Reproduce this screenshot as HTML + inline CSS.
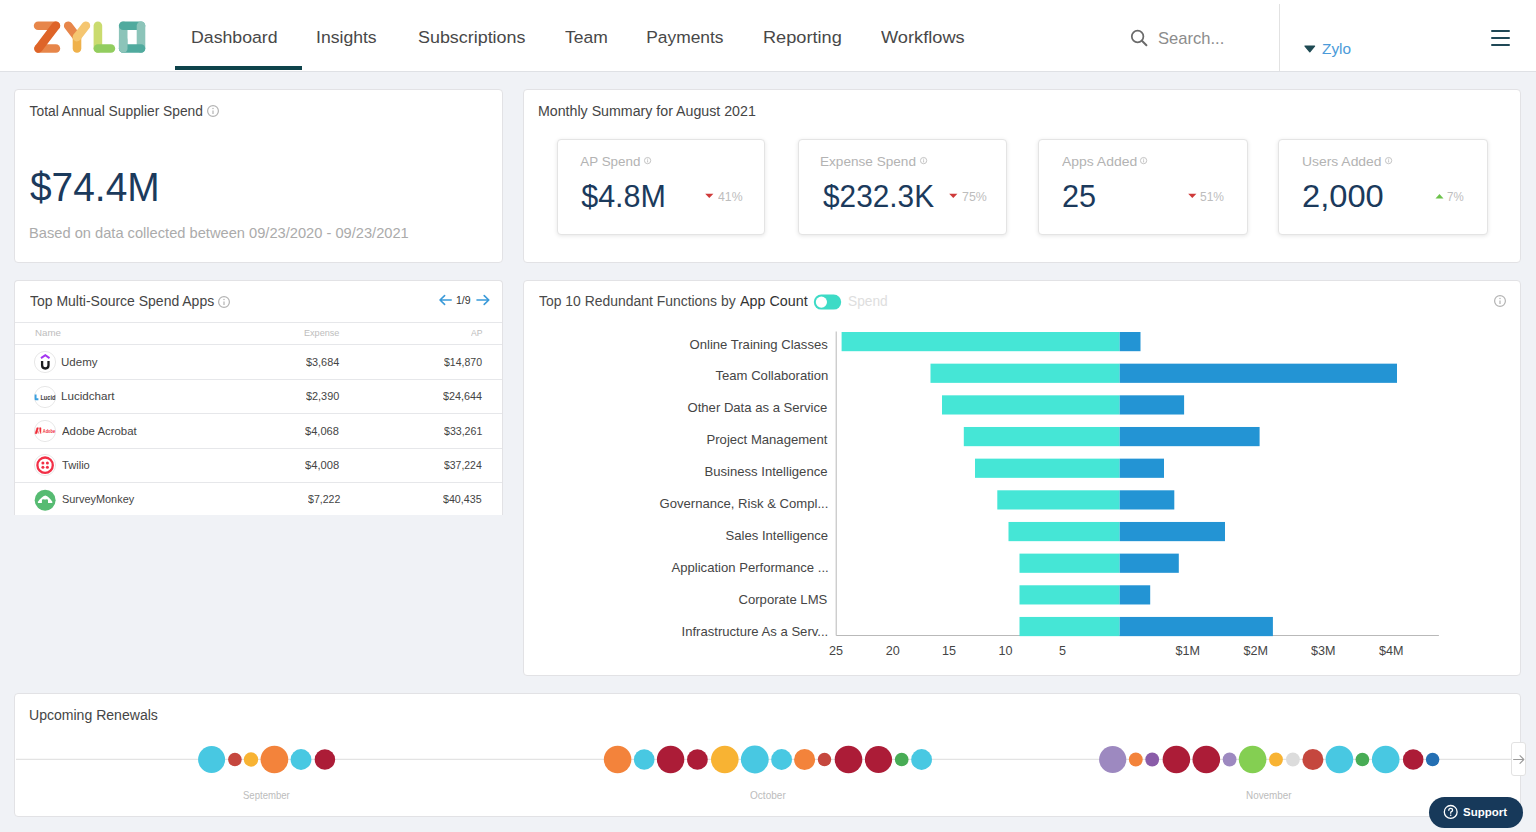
<!DOCTYPE html>
<html><head><meta charset="utf-8"><style>
html,body{margin:0;padding:0;}
body{width:1536px;height:832px;overflow:hidden;background:#f0f2f6;position:relative;font-family:"Liberation Sans",sans-serif;}
.t{position:absolute;white-space:nowrap;line-height:1;}
</style></head><body>
<div style="position:absolute;left:0.00px;top:0.00px;width:1536.00px;height:71.00px;background:#fff;border-bottom:1px solid #dfe1e5;box-sizing:content-box;"></div>
<div style="position:absolute;left:174.60px;top:66.20px;width:127.40px;height:4.00px;background:#0e434b;"></div>
<div style="position:absolute;left:1279.00px;top:4.00px;width:1.00px;height:67.00px;background:#e2e2e2;"></div>
<svg style="position:absolute;left:25px;top:10px" width="130" height="52" viewBox="0 0 130 52">
<g stroke-linecap="round" stroke-width="8.6" fill="none">
<line x1="13.1" y1="15.7" x2="30.9" y2="15.7" stroke="#e7864a"/>
<line x1="13.5" y1="38.5" x2="30.9" y2="38.5" stroke="#e7864a"/>
<line x1="30.9" y1="15.7" x2="13.5" y2="38.5" stroke="#de6428"/>
<line x1="43.2" y1="15.7" x2="52.0" y2="27.1" stroke="#e7864a"/>
<line x1="52.0" y1="27.1" x2="52.0" y2="38.5" stroke="#efb14b"/>
<line x1="60.9" y1="15.7" x2="52.0" y2="27.1" stroke="#f5c671"/>
<line x1="72.9" y1="15.7" x2="72.9" y2="38.5" stroke="#cadb6e"/>
<line x1="72.9" y1="38.5" x2="85.9" y2="38.5" stroke="#92cd5f"/>
<line x1="98.2" y1="15.7" x2="98.2" y2="38.5" stroke="#8cc4b9"/>
<line x1="98.2" y1="15.7" x2="116" y2="15.7" stroke="#50aa9e"/>
<line x1="116" y1="15.7" x2="116" y2="38.5" stroke="#8cc4b9"/>
<line x1="98.2" y1="38.5" x2="116" y2="38.5" stroke="#50aa9e"/>
<line x1="98.2" y1="30" x2="98.2" y2="38.5" stroke="#8cc4b9"/>
</g></svg>
<svg style="position:absolute;left:1125px;top:25px" width="30" height="30" viewBox="0 0 30 30">
<circle cx="12.6" cy="11.45" r="5.8" stroke="#6a6a6a" stroke-width="1.75" fill="none"/>
<line x1="16.9" y1="15.8" x2="21.4" y2="20.2" stroke="#6a6a6a" stroke-width="2" stroke-linecap="round"/></svg>
<svg style="position:absolute;left:1300px;top:40px" width="20" height="16" viewBox="0 0 20 16">
<path d="M5 6 L14.6 6 L9.8 11.8 Z" fill="#1f4a53" stroke="#1f4a53" stroke-width="1.2" stroke-linejoin="round"/></svg>
<div style="position:absolute;left:1491.00px;top:29.60px;width:19.00px;height:2.00px;background:#1f4856;border-radius:1px;"></div>
<div style="position:absolute;left:1491.00px;top:37.00px;width:19.00px;height:2.00px;background:#1f4856;border-radius:1px;"></div>
<div style="position:absolute;left:1491.00px;top:44.40px;width:19.00px;height:2.00px;background:#1f4856;border-radius:1px;"></div>
<div style="position:absolute;left:14.00px;top:89.00px;width:489.00px;height:174.00px;background:#fff;border:1px solid #e2e2e5;border-radius:4px;box-sizing:border-box;"></div>
<div style="position:absolute;left:523.00px;top:89.00px;width:998.00px;height:174.00px;background:#fff;border:1px solid #e2e2e5;border-radius:4px;box-sizing:border-box;"></div>
<div style="position:absolute;left:14.00px;top:280.00px;width:489.00px;height:240.00px;background:#fff;border:1px solid #e2e2e5;border-radius:4px;box-sizing:border-box;border-bottom:none;border-radius:4px 4px 0 0;"></div>
<div style="position:absolute;left:523.00px;top:280.00px;width:998.00px;height:396.00px;background:#fff;border:1px solid #e2e2e5;border-radius:4px;box-sizing:border-box;"></div>
<div style="position:absolute;left:14.00px;top:693.00px;width:1507.00px;height:124.00px;background:#fff;border:1px solid #e2e2e5;border-radius:4px;box-sizing:border-box;"></div>
<div style="position:absolute;left:0.00px;top:515.30px;width:510.00px;height:5.50px;background:#f0f2f6;"></div>
<svg style="position:absolute;left:206.00px;top:103.50px" width="14.00" height="14.00" viewBox="0 0 14.00 14.00"><circle cx="7.00" cy="7.00" r="5.40" stroke="#b3b3b3" stroke-width="1.20" fill="none"/><line x1="7.00" y1="6.40" x2="7.00" y2="10.00" stroke="#b3b3b3" stroke-width="1.20"/><circle cx="7.00" cy="4.48" r="0.72" fill="#b3b3b3"/></svg>
<div style="position:absolute;left:557.20px;top:138.50px;width:208.30px;height:96.00px;background:#fff;border:1px solid #e4e4e4;border-radius:4px;box-sizing:border-box;box-shadow:0 1px 4px rgba(0,0,0,0.10);"></div>
<svg style="position:absolute;left:642.80px;top:156.00px" width="9.20" height="9.20" viewBox="0 0 9.20 9.20"><circle cx="4.60" cy="4.60" r="3.15" stroke="#bdbdbd" stroke-width="0.90" fill="none"/><line x1="4.60" y1="4.24" x2="4.60" y2="6.40" stroke="#bdbdbd" stroke-width="0.90"/><circle cx="4.60" cy="3.09" r="0.54" fill="#bdbdbd"/></svg>
<svg style="position:absolute;left:705.10px;top:193px" width="10" height="7" viewBox="0 0 10 7"><path d="M0.2 0.8 L8.4 0.8 L4.3 4.9 Z" fill="#cf3a3a"/></svg>
<div style="position:absolute;left:797.50px;top:138.50px;width:209.10px;height:96.00px;background:#fff;border:1px solid #e4e4e4;border-radius:4px;box-sizing:border-box;box-shadow:0 1px 4px rgba(0,0,0,0.10);"></div>
<svg style="position:absolute;left:918.60px;top:156.00px" width="9.20" height="9.20" viewBox="0 0 9.20 9.20"><circle cx="4.60" cy="4.60" r="3.15" stroke="#bdbdbd" stroke-width="0.90" fill="none"/><line x1="4.60" y1="4.24" x2="4.60" y2="6.40" stroke="#bdbdbd" stroke-width="0.90"/><circle cx="4.60" cy="3.09" r="0.54" fill="#bdbdbd"/></svg>
<svg style="position:absolute;left:949.30px;top:193px" width="10" height="7" viewBox="0 0 10 7"><path d="M0.2 0.8 L8.4 0.8 L4.3 4.9 Z" fill="#cf3a3a"/></svg>
<div style="position:absolute;left:1037.60px;top:138.50px;width:210.00px;height:96.00px;background:#fff;border:1px solid #e4e4e4;border-radius:4px;box-sizing:border-box;box-shadow:0 1px 4px rgba(0,0,0,0.10);"></div>
<svg style="position:absolute;left:1139.20px;top:156.00px" width="9.20" height="9.20" viewBox="0 0 9.20 9.20"><circle cx="4.60" cy="4.60" r="3.15" stroke="#bdbdbd" stroke-width="0.90" fill="none"/><line x1="4.60" y1="4.24" x2="4.60" y2="6.40" stroke="#bdbdbd" stroke-width="0.90"/><circle cx="4.60" cy="3.09" r="0.54" fill="#bdbdbd"/></svg>
<svg style="position:absolute;left:1187.80px;top:193px" width="10" height="7" viewBox="0 0 10 7"><path d="M0.2 0.8 L8.4 0.8 L4.3 4.9 Z" fill="#cf3a3a"/></svg>
<div style="position:absolute;left:1278.40px;top:138.50px;width:209.20px;height:96.00px;background:#fff;border:1px solid #e4e4e4;border-radius:4px;box-sizing:border-box;box-shadow:0 1px 4px rgba(0,0,0,0.10);"></div>
<svg style="position:absolute;left:1383.80px;top:156.00px" width="9.20" height="9.20" viewBox="0 0 9.20 9.20"><circle cx="4.60" cy="4.60" r="3.15" stroke="#bdbdbd" stroke-width="0.90" fill="none"/><line x1="4.60" y1="4.24" x2="4.60" y2="6.40" stroke="#bdbdbd" stroke-width="0.90"/><circle cx="4.60" cy="3.09" r="0.54" fill="#bdbdbd"/></svg>
<svg style="position:absolute;left:1434.60px;top:193px" width="10" height="7" viewBox="0 0 10 7"><path d="M0.5 5.5 L4.5 1 L8.5 5.5 Z" fill="#6cc24a"/></svg>
<svg style="position:absolute;left:216.60px;top:295.00px" width="14.00" height="14.00" viewBox="0 0 14.00 14.00"><circle cx="7.00" cy="7.00" r="5.40" stroke="#b3b3b3" stroke-width="1.20" fill="none"/><line x1="7.00" y1="6.40" x2="7.00" y2="10.00" stroke="#b3b3b3" stroke-width="1.20"/><circle cx="7.00" cy="4.48" r="0.72" fill="#b3b3b3"/></svg>
<svg style="position:absolute;left:436px;top:292px" width="58" height="16" viewBox="0 0 58 16">
<g stroke="#3a9ad9" stroke-width="1.6" fill="none" stroke-linecap="round" stroke-linejoin="round">
<path d="M4 8 L15.2 8 M8.6 3.6 L4 8 L8.6 12.4"/>
<path d="M41 8 L52.8 8 M48.2 3.6 L52.8 8 L48.2 12.4"/>
</g></svg>
<div style="position:absolute;left:15.00px;top:322.00px;width:487.00px;height:1.00px;background:#e6e7ea;"></div>
<div style="position:absolute;left:15.00px;top:344.00px;width:487.00px;height:1.00px;background:#e6e7ea;"></div>
<div style="position:absolute;left:15.00px;top:379.00px;width:487.00px;height:1.00px;background:#e6e7ea;"></div>
<div style="position:absolute;left:15.00px;top:413.00px;width:487.00px;height:1.00px;background:#e6e7ea;"></div>
<div style="position:absolute;left:15.00px;top:448.00px;width:487.00px;height:1.00px;background:#e6e7ea;"></div>
<div style="position:absolute;left:15.00px;top:482.00px;width:487.00px;height:1.00px;background:#e6e7ea;"></div>
<svg style="position:absolute;left:33px;top:350.20px" width="24" height="24" viewBox="0 0 24 24"><circle cx="12" cy="12" r="10.6" fill="#fff" stroke="#e4e4e4" stroke-width="0.9"/><path d="M9.1 10.9 L9.1 15.3 Q9.1 18.5 12.3 18.5 Q15.5 18.5 15.5 15.3 L15.5 10.9" stroke="#1c1d1f" stroke-width="2.3" fill="none"/><path d="M8 8.1 L12.3 5.2 L16.5 8.1" stroke="#a435f0" stroke-width="2" fill="none"/></svg>
<svg style="position:absolute;left:33px;top:384.80px" width="24" height="24" viewBox="0 0 24 24"><circle cx="12" cy="12" r="10.6" fill="#fff" stroke="#e4e4e4" stroke-width="0.9"/><path d="M2.6 9.4 L2.6 14.2 L5.4 14.2" stroke="#3aa0e0" stroke-width="1.9" fill="none" stroke-linejoin="round"/><text x="7.4" y="15" font-family="Liberation Sans" font-size="6.6" font-weight="bold" fill="#3d3d3d" textLength="15.2" lengthAdjust="spacingAndGlyphs">Lucid</text></svg>
<svg style="position:absolute;left:33px;top:419.10px" width="24" height="24" viewBox="0 0 24 24"><circle cx="12" cy="12" r="10.6" fill="#fff" stroke="#e4e4e4" stroke-width="0.9"/><path d="M2 14.6 L3.9 8.8 L5.4 8.8 L4 14.6 Z M6.6 8.8 L8 8.8 L7.8 14.6 L6.9 12.5 Z M5 12 L5.9 14.8" fill="#ef2b37" stroke="#ef2b37" stroke-width="0.5"/><text x="9.8" y="13.9" font-family="Liberation Sans" font-size="5.2" font-weight="bold" fill="#ef2b37" textLength="12.4" lengthAdjust="spacingAndGlyphs">Adobe</text></svg>
<svg style="position:absolute;left:33px;top:453.10px" width="24" height="24" viewBox="0 0 24 24"><circle cx="12" cy="12" r="10.6" fill="#fff" stroke="#e4e4e4" stroke-width="0.9"/><circle cx="12.1" cy="12.2" r="7.7" stroke="#f22f46" stroke-width="2.3" fill="none"/><circle cx="9.9" cy="10" r="1.5" fill="#f22f46"/><circle cx="14.4" cy="10" r="1.5" fill="#f22f46"/><circle cx="9.9" cy="14.3" r="1.5" fill="#f22f46"/><circle cx="14.4" cy="14.3" r="1.5" fill="#f22f46"/></svg>
<svg style="position:absolute;left:33px;top:487.60px" width="24" height="24" viewBox="0 0 24 24"><circle cx="12.15" cy="12.2" r="10.45" fill="#56bb72"/><path d="M4.9 13.8 Q8.4 8.6 12.3 7.4 Q16.2 8.6 19.3 13.8 L19.3 15.1 L4.9 15.1 Z" fill="#fff"/><path d="M8.9 15.6 L8.9 12.4 Q8.9 11.2 10.2 11.2 Q12.1 11.9 13.8 11.2 Q15 11.2 15 12.4 L15 15.6 Z" fill="#56bb72"/></svg>
<svg style="position:absolute;left:812px;top:293px" width="31" height="18" viewBox="0 0 31 18">
<rect x="1.8" y="1.6" width="27.4" height="15" rx="7.5" fill="#3ddbc6"/>
<circle cx="9.4" cy="9.1" r="5.6" fill="#fff"/></svg>
<svg style="position:absolute;left:1493.40px;top:293.50px" width="14.00" height="14.00" viewBox="0 0 14.00 14.00"><circle cx="7.00" cy="7.00" r="5.40" stroke="#b3b3b3" stroke-width="1.20" fill="none"/><line x1="7.00" y1="6.40" x2="7.00" y2="10.00" stroke="#b3b3b3" stroke-width="1.20"/><circle cx="7.00" cy="4.48" r="0.72" fill="#b3b3b3"/></svg>
<svg style="position:absolute;left:0;top:0" width="1536" height="832" viewBox="0 0 1536 832"><line x1="836.2" y1="331.5" x2="836.2" y2="635.5" stroke="#b9b9b9" stroke-width="1"/><line x1="836.2" y1="635.5" x2="1438.9" y2="635.5" stroke="#b9b9b9" stroke-width="1"/><rect x="841.60" y="332.00" width="278.10" height="19.2" fill="#45e6d6"/><rect x="1119.7" y="332.00" width="20.80" height="19.2" fill="#2394d4"/><rect x="930.50" y="363.66" width="189.20" height="19.2" fill="#45e6d6"/><rect x="1119.7" y="363.66" width="277.30" height="19.2" fill="#2394d4"/><rect x="942.00" y="395.32" width="177.70" height="19.2" fill="#45e6d6"/><rect x="1119.7" y="395.32" width="64.40" height="19.2" fill="#2394d4"/><rect x="963.80" y="426.98" width="155.90" height="19.2" fill="#45e6d6"/><rect x="1119.7" y="426.98" width="139.90" height="19.2" fill="#2394d4"/><rect x="975.00" y="458.64" width="144.70" height="19.2" fill="#45e6d6"/><rect x="1119.7" y="458.64" width="44.30" height="19.2" fill="#2394d4"/><rect x="997.30" y="490.30" width="122.40" height="19.2" fill="#45e6d6"/><rect x="1119.7" y="490.30" width="54.60" height="19.2" fill="#2394d4"/><rect x="1008.50" y="521.96" width="111.20" height="19.2" fill="#45e6d6"/><rect x="1119.7" y="521.96" width="105.30" height="19.2" fill="#2394d4"/><rect x="1019.50" y="553.62" width="100.20" height="19.2" fill="#45e6d6"/><rect x="1119.7" y="553.62" width="59.10" height="19.2" fill="#2394d4"/><rect x="1019.50" y="585.28" width="100.20" height="19.2" fill="#45e6d6"/><rect x="1119.7" y="585.28" width="30.50" height="19.2" fill="#2394d4"/><rect x="1019.50" y="616.94" width="100.20" height="19.2" fill="#45e6d6"/><rect x="1119.7" y="616.94" width="153.20" height="19.2" fill="#2394d4"/></svg>
<svg style="position:absolute;left:0;top:0" width="1536" height="832" viewBox="0 0 1536 832"><line x1="16" y1="759.3" x2="1511" y2="759.3" stroke="#dddddd" stroke-width="1"/><circle cx="211.60" cy="759.5" r="13.50" fill="#48c8e2"/><circle cx="234.90" cy="759.5" r="6.80" fill="#c5473e"/><circle cx="251.00" cy="759.5" r="7.20" fill="#f8b333"/><circle cx="274.40" cy="759.5" r="13.85" fill="#f3833b"/><circle cx="301.00" cy="759.5" r="10.40" fill="#48c8e2"/><circle cx="324.90" cy="759.5" r="10.20" fill="#ac1c37"/><circle cx="617.60" cy="759.5" r="13.75" fill="#f3833b"/><circle cx="644.20" cy="759.5" r="10.30" fill="#48c8e2"/><circle cx="670.60" cy="759.5" r="13.70" fill="#ac1c37"/><circle cx="697.40" cy="759.5" r="10.35" fill="#ac1c37"/><circle cx="724.80" cy="759.5" r="13.80" fill="#f8b333"/><circle cx="754.80" cy="759.5" r="13.90" fill="#48c8e2"/><circle cx="781.60" cy="759.5" r="10.40" fill="#48c8e2"/><circle cx="804.60" cy="759.5" r="10.50" fill="#f3833b"/><circle cx="824.50" cy="759.5" r="6.70" fill="#c5473e"/><circle cx="848.50" cy="759.5" r="13.80" fill="#ac1c37"/><circle cx="878.50" cy="759.5" r="13.60" fill="#ac1c37"/><circle cx="901.70" cy="759.5" r="6.85" fill="#48ac55"/><circle cx="921.60" cy="759.5" r="10.40" fill="#48c8e2"/><circle cx="1112.70" cy="759.5" r="13.60" fill="#9d89c0"/><circle cx="1135.80" cy="759.5" r="6.90" fill="#f3833b"/><circle cx="1152.20" cy="759.5" r="6.90" fill="#8a5ca8"/><circle cx="1176.40" cy="759.5" r="13.75" fill="#ac1c37"/><circle cx="1206.30" cy="759.5" r="13.80" fill="#ac1c37"/><circle cx="1229.60" cy="759.5" r="6.90" fill="#9d89c0"/><circle cx="1252.60" cy="759.5" r="13.80" fill="#84cf52"/><circle cx="1276.00" cy="759.5" r="6.90" fill="#f8b333"/><circle cx="1292.90" cy="759.5" r="6.90" fill="#dcdcdc"/><circle cx="1312.90" cy="759.5" r="10.45" fill="#c5473e"/><circle cx="1339.40" cy="759.5" r="13.80" fill="#48c8e2"/><circle cx="1362.40" cy="759.5" r="6.85" fill="#48ac55"/><circle cx="1385.70" cy="759.5" r="13.80" fill="#48c8e2"/><circle cx="1413.20" cy="759.5" r="10.25" fill="#ac1c37"/><circle cx="1432.60" cy="759.5" r="6.75" fill="#246fb3"/></svg>
<div style="position:absolute;left:1510.70px;top:742.30px;width:15.70px;height:34.10px;background:#fff;border:1px solid #e2e2e2;border-radius:3px;box-sizing:border-box;"></div>
<svg style="position:absolute;left:1511px;top:752px" width="16" height="16" viewBox="0 0 16 16">
<g stroke="#9a9a9a" stroke-width="1.1" fill="none" stroke-linecap="round" stroke-linejoin="round"><path d="M2.6 7.5 L12.8 7.5 M9 3.6 L12.8 7.5 L9 11.4"/></g></svg>
<div style="position:absolute;left:1428.60px;top:796.80px;width:94.40px;height:31.30px;background:#17395a;border-radius:16px;"></div>
<svg style="position:absolute;left:1442px;top:803px" width="18" height="18" viewBox="0 0 18 18">
<circle cx="8.7" cy="8.9" r="6.4" stroke="#fff" stroke-width="1.3" fill="none"/>
<path d="M6.8 7.3 Q6.8 5.3 8.7 5.3 Q10.6 5.3 10.6 7 Q10.6 8.2 9.3 8.7 Q8.7 9 8.7 10.2" stroke="#fff" stroke-width="1.3" fill="none" stroke-linecap="round"/>
<circle cx="8.7" cy="12.3" r="0.8" fill="#fff"/></svg>
<div class="t" style="left:191.18px;top:29px;font-size:17.4px;color:#484848;transform:scaleX(1.0181);transform-origin:0 0;">Dashboard</div>
<div class="t" style="left:316.29px;top:29px;font-size:17.4px;color:#484848;transform:scaleX(1.0119);transform-origin:0 0;">Insights</div>
<div class="t" style="left:417.57px;top:29px;font-size:17.4px;color:#484848;transform:scaleX(1.0291);transform-origin:0 0;">Subscriptions</div>
<div class="t" style="left:564.80px;top:29px;font-size:17.4px;color:#484848;transform:scaleX(1.0048);transform-origin:0 0;">Team</div>
<div class="t" style="left:646.20px;top:29px;font-size:17.4px;color:#484848;">Payments</div>
<div class="t" style="left:762.96px;top:29px;font-size:17.4px;color:#484848;transform:scaleX(1.0446);transform-origin:0 0;">Reporting</div>
<div class="t" style="left:880.90px;top:29px;font-size:17.4px;color:#484848;transform:scaleX(1.0475);transform-origin:0 0;">Workflows</div>
<div class="t" style="left:1158.33px;top:30px;font-size:17px;color:#8c8c8c;transform:scaleX(0.9742);transform-origin:0 0;">Search...</div>
<div class="t" style="left:1321.50px;top:41px;font-size:15px;color:#4b9bd9;transform:scaleX(1.0250);transform-origin:0 0;">Zylo</div>
<div class="t" style="left:29.60px;top:105px;font-size:13.8px;color:#454545;">Total Annual Supplier Spend</div>
<div class="t" style="left:30.40px;top:167px;font-size:40px;color:#1b3a5c;transform:scaleX(0.9715);transform-origin:0 0;">$74.4M</div>
<div class="t" style="left:28.87px;top:226px;font-size:14.2px;color:#ababab;transform:scaleX(1.0331);transform-origin:0 0;">Based on data collected between 09/23/2020 - 09/23/2021</div>
<div class="t" style="left:537.87px;top:105px;font-size:13.8px;color:#454545;transform:scaleX(1.0290);transform-origin:0 0;">Monthly Summary for August 2021</div>
<div class="t" style="left:580.30px;top:155px;font-size:13.4px;color:#b3b3b3;">AP Spend</div>
<div class="t" style="left:581.20px;top:181px;font-size:30.5px;color:#1b3a5c;">$4.8M</div>
<div class="t" style="left:717.80px;top:190px;font-size:13.2px;color:#bdbdbd;transform:scaleX(0.9308);transform-origin:0 0;">41%</div>
<div class="t" style="left:820.48px;top:155px;font-size:13.4px;color:#b3b3b3;transform:scaleX(1.0151);transform-origin:0 0;">Expense Spend</div>
<div class="t" style="left:822.60px;top:181px;font-size:30.5px;color:#1b3a5c;transform:scaleX(0.9770);transform-origin:0 0;">$232.3K</div>
<div class="t" style="left:961.50px;top:190px;font-size:13.2px;color:#bdbdbd;transform:scaleX(0.9385);transform-origin:0 0;">75%</div>
<div class="t" style="left:1061.60px;top:155px;font-size:13.4px;color:#b3b3b3;transform:scaleX(1.0403);transform-origin:0 0;">Apps Added</div>
<div class="t" style="left:1061.79px;top:181px;font-size:30.5px;color:#1b3a5c;transform:scaleX(1.0063);transform-origin:0 0;">25</div>
<div class="t" style="left:1199.50px;top:190px;font-size:13.2px;color:#bdbdbd;transform:scaleX(0.9115);transform-origin:0 0;">51%</div>
<div class="t" style="left:1301.76px;top:155px;font-size:13.4px;color:#b3b3b3;transform:scaleX(1.0373);transform-origin:0 0;">Users Added</div>
<div class="t" style="left:1302.13px;top:181px;font-size:30.5px;color:#1b3a5c;transform:scaleX(1.0716);transform-origin:0 0;">2,000</div>
<div class="t" style="left:1447.30px;top:190px;font-size:13.2px;color:#bdbdbd;transform:scaleX(0.8737);transform-origin:0 0;">7%</div>
<div class="t" style="left:29.80px;top:295px;font-size:13.8px;color:#454545;transform:scaleX(1.0132);transform-origin:0 0;">Top Multi-Source Spend Apps</div>
<div class="t" style="left:455.55px;top:296px;font-size:10px;color:#333333;transform:scaleX(1.0538);transform-origin:0 0;">1/9</div>
<div class="t" style="left:34.50px;top:328px;font-size:9.8px;color:#bdbdbd;transform:scaleX(0.9923);transform-origin:0 0;">Name</div>
<div class="t" style="left:303.80px;top:328px;font-size:9.8px;color:#bdbdbd;transform:scaleX(0.9289);transform-origin:0 0;">Expense</div>
<div class="t" style="left:471.10px;top:328px;font-size:9.8px;color:#bdbdbd;transform:scaleX(0.8769);transform-origin:0 0;">AP</div>
<div class="t" style="left:60.95px;top:357px;font-size:11.0px;color:#444444;transform:scaleX(1.0471);transform-origin:0 0;">Udemy</div>
<div class="t" style="left:305.60px;top:357px;font-size:11.0px;color:#444444;transform:scaleX(0.9882);transform-origin:0 0;">$3,684</div>
<div class="t" style="left:444.00px;top:357px;font-size:11.0px;color:#444444;transform:scaleX(0.9550);transform-origin:0 0;">$14,870</div>
<div class="t" style="left:60.95px;top:391px;font-size:11.0px;color:#444444;transform:scaleX(1.0540);transform-origin:0 0;">Lucidchart</div>
<div class="t" style="left:305.60px;top:391px;font-size:11.0px;color:#444444;transform:scaleX(0.9882);transform-origin:0 0;">$2,390</div>
<div class="t" style="left:443.00px;top:391px;font-size:11.0px;color:#444444;transform:scaleX(0.9800);transform-origin:0 0;">$24,644</div>
<div class="t" style="left:62.00px;top:426px;font-size:11.0px;color:#444444;transform:scaleX(1.0347);transform-origin:0 0;">Adobe Acrobat</div>
<div class="t" style="left:305.00px;top:426px;font-size:11.0px;color:#444444;transform:scaleX(1.0059);transform-origin:0 0;">$4,068</div>
<div class="t" style="left:443.70px;top:426px;font-size:11.0px;color:#444444;transform:scaleX(0.9625);transform-origin:0 0;">$33,261</div>
<div class="t" style="left:62.00px;top:460px;font-size:11.0px;color:#444444;transform:scaleX(1.0107);transform-origin:0 0;">Twilio</div>
<div class="t" style="left:304.60px;top:460px;font-size:11.0px;color:#444444;transform:scaleX(1.0176);transform-origin:0 0;">$4,008</div>
<div class="t" style="left:444.30px;top:460px;font-size:11.0px;color:#444444;transform:scaleX(0.9475);transform-origin:0 0;">$37,224</div>
<div class="t" style="left:62.00px;top:494px;font-size:11.0px;color:#444444;transform:scaleX(0.9918);transform-origin:0 0;">SurveyMonkey</div>
<div class="t" style="left:307.50px;top:494px;font-size:11.0px;color:#444444;transform:scaleX(0.9606);transform-origin:0 0;">$7,222</div>
<div class="t" style="left:443.40px;top:494px;font-size:11.0px;color:#444444;transform:scaleX(0.9700);transform-origin:0 0;">$40,435</div>
<div class="t" style="left:539.20px;top:295px;font-size:13.8px;color:#4a4a4a;transform:scaleX(1.0092);transform-origin:0 0;">Top 10 Redundant Functions by</div>
<div class="t" style="left:739.60px;top:295px;font-size:13.8px;color:#333333;transform:scaleX(1.0369);transform-origin:0 0;">App Count</div>
<div class="t" style="left:848.21px;top:295px;font-size:13.8px;color:#dedede;transform:scaleX(0.9947);transform-origin:0 0;">Spend</div>
<div class="t" style="left:689.50px;top:338px;font-size:13.1px;color:#454545;">Online Training Classes</div>
<div class="t" style="left:715.50px;top:369px;font-size:13.1px;color:#454545;">Team Collaboration</div>
<div class="t" style="left:687.50px;top:401px;font-size:13.1px;color:#454545;">Other Data as a Service</div>
<div class="t" style="left:706.50px;top:433px;font-size:13.1px;color:#454545;">Project Management</div>
<div class="t" style="left:704.50px;top:465px;font-size:13.1px;color:#454545;">Business Intelligence</div>
<div class="t" style="left:659.50px;top:497px;font-size:13.1px;color:#454545;">Governance, Risk &amp; Compl...</div>
<div class="t" style="left:725.50px;top:529px;font-size:13.1px;color:#454545;">Sales Intelligence</div>
<div class="t" style="left:671.50px;top:561px;font-size:13.1px;color:#454545;">Application Performance ...</div>
<div class="t" style="left:738.50px;top:593px;font-size:13.1px;color:#454545;">Corporate LMS</div>
<div class="t" style="left:681.50px;top:625px;font-size:13.1px;color:#454545;">Infrastructure As a Serv...</div>
<div class="t" style="left:829.00px;top:645px;font-size:12.6px;color:#454545;">25</div>
<div class="t" style="left:885.70px;top:645px;font-size:12.6px;color:#454545;">20</div>
<div class="t" style="left:941.90px;top:645px;font-size:12.6px;color:#454545;">15</div>
<div class="t" style="left:998.50px;top:645px;font-size:12.6px;color:#454545;">10</div>
<div class="t" style="left:1059.00px;top:645px;font-size:12.6px;color:#454545;">5</div>
<div class="t" style="left:1175.60px;top:645px;font-size:12.6px;color:#454545;">$1M</div>
<div class="t" style="left:1243.60px;top:645px;font-size:12.6px;color:#454545;">$2M</div>
<div class="t" style="left:1311.10px;top:645px;font-size:12.6px;color:#454545;">$3M</div>
<div class="t" style="left:1379.10px;top:645px;font-size:12.6px;color:#454545;">$4M</div>
<div class="t" style="left:28.58px;top:709px;font-size:13.8px;color:#454545;transform:scaleX(1.0183);transform-origin:0 0;">Upcoming Renewals</div>
<div class="t" style="left:242.70px;top:791px;font-size:10.2px;color:#bcbcbc;transform:scaleX(0.9380);transform-origin:0 0;">September</div>
<div class="t" style="left:750.20px;top:791px;font-size:10.2px;color:#bcbcbc;transform:scaleX(0.9861);transform-origin:0 0;">October</div>
<div class="t" style="left:1246.03px;top:791px;font-size:10.2px;color:#bcbcbc;transform:scaleX(0.9696);transform-origin:0 0;">November</div>
<div class="t" style="left:1463.20px;top:807px;font-size:11.2px;color:#ffffff;font-weight:bold;transform:scaleX(1.0256);transform-origin:0 0;">Support</div>
</body></html>
